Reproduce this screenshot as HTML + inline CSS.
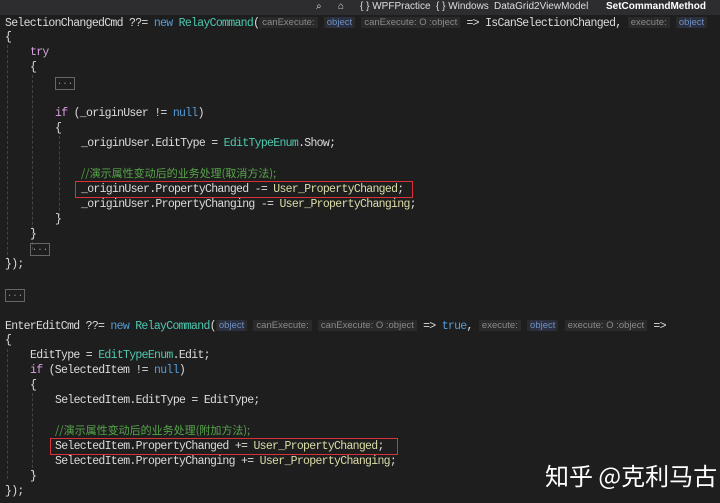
<!DOCTYPE html>
<html><head><meta charset="utf-8"><style>
body{margin:0;width:720px;height:503px;background:#1e1e1e;overflow:hidden;position:relative;font-family:"Liberation Mono","Noto Sans CJK SC",monospace;}
.bar{position:absolute;left:0;top:0;width:720px;height:15px;background:#2d2d30;font-family:"Liberation Sans",sans-serif;font-size:10px;color:#ddd;}
.bar span{position:absolute;top:1px;white-space:nowrap}
.l{position:absolute;white-space:pre;font-size:11.5px;letter-spacing:-0.7px;line-height:15px;color:#dcdcdc;height:15px}
.k{color:#569cd6}.t{color:#4ec9b0}.p{color:#d8a0df}.m{color:#dcdcaa}.c{color:#57a64a;font-family:"Noto Sans CJK SC",sans-serif;letter-spacing:0}
.h{font-family:"Liberation Sans",sans-serif;font-size:9.5px;letter-spacing:0;color:#8a8a8a;background:#2a2a2a;padding:0 3px;vertical-align:1px}
.h b{font-weight:normal;color:#6f8fbf;background:#2a3040}
.box{position:absolute;border:1px solid #d9313a}
.dots{position:absolute;border:1px solid #666;color:#999;font-size:9px;line-height:9px;width:18px;height:11px;text-align:center}
.g{position:absolute;border-left:1px dashed #444;width:0}
</style></head><body>
<div class="bar"><span style="left:316px">⌕</span><span style="left:338px">⌂</span><span style="left:360px">{ } WPFPractice</span><span style="left:436px">{ } Windows</span><span style="left:494px;color:#ddd">DataGrid2ViewModel</span><span style="left:606px;font-weight:bold;color:#fff">SetCommandMethod</span></div>
<div class="g" style="left:7px;top:45px;height:215px"></div>
<div class="g" style="left:32px;top:75px;height:175px"></div>
<div class="g" style="left:59px;top:136px;height:80px"></div>
<div class="g" style="left:7px;top:349px;height:130px"></div>
<div class="g" style="left:32px;top:393px;height:80px"></div>

<div class="l" style="left:5px;top:15px">SelectionChangedCmd ??= <span class="k">new</span> <span class="t">RelayCommand</span>(<span class="h">canExecute:</span> <span class="h"><b>object</b></span> <span class="h">canExecute: O :object</span> =&gt; IsCanSelectionChanged, <span class="h">execute:</span> <span class="h"><b>object</b></span></div>
<div class="l" style="left:5px;top:30px">{</div>
<div class="l" style="left:30px;top:45px"><span class="p">try</span></div>
<div class="l" style="left:30px;top:60px">{</div>
<div class="dots" style="left:55px;top:77px">...</div>
<div class="l" style="left:55px;top:106px"><span class="p">if</span> (_originUser != <span class="k">null</span>)</div>
<div class="l" style="left:55px;top:121px">{</div>
<div class="l" style="left:81px;top:136px">_originUser.EditType = <span class="t">EditTypeEnum</span>.Show;</div>
<div class="l c" style="left:81px;top:166px;font-size:11px">//演示属性变动后的业务处理(取消方法);</div>
<div class="l" style="left:81px;top:182px">_originUser.PropertyChanged -= <span class="m">User_PropertyChanged</span>;</div>
<div class="box" style="left:75px;top:181px;width:336px;height:15px"></div>
<div class="l" style="left:81px;top:197px">_originUser.PropertyChanging -= <span class="m">User_PropertyChanging</span>;</div>
<div class="l" style="left:55px;top:212px">}</div>
<div class="l" style="left:30px;top:227px">}</div>
<div class="dots" style="left:30px;top:243px">...</div>
<div class="l" style="left:5px;top:257px">});</div>
<div class="dots" style="left:5px;top:289px">...</div>
<div class="l" style="left:5px;top:318px">EnterEditCmd ??= <span class="k">new</span> <span class="t">RelayCommand</span>(<span class="h"><b>object</b></span> <span class="h">canExecute:</span> <span class="h">canExecute: O :object</span> =&gt; <span class="k">true</span>, <span class="h">execute:</span> <span class="h"><b>object</b></span> <span class="h">execute: O :object</span> =&gt;</div>
<div class="l" style="left:5px;top:333px">{</div>
<div class="l" style="left:30px;top:348px">EditType = <span class="t">EditTypeEnum</span>.Edit;</div>
<div class="l" style="left:30px;top:363px"><span class="p">if</span> (SelectedItem != <span class="k">null</span>)</div>
<div class="l" style="left:30px;top:378px">{</div>
<div class="l" style="left:55px;top:393px">SelectedItem.EditType = EditType;</div>
<div class="l c" style="left:55px;top:423px;font-size:11px">//演示属性变动后的业务处理(附加方法);</div>
<div class="l" style="left:55px;top:439px">SelectedItem.PropertyChanged += <span class="m">User_PropertyChanged</span>;</div>
<div class="box" style="left:50px;top:438px;width:346px;height:15px"></div>
<div class="l" style="left:55px;top:454px">SelectedItem.PropertyChanging += <span class="m">User_PropertyChanging</span>;</div>
<div class="l" style="left:30px;top:469px">}</div>
<div class="l" style="left:5px;top:484px">});</div>
<div style="position:absolute;left:545px;top:457px;font-family:'Noto Sans CJK SC',sans-serif;font-size:24px;color:#fff;white-space:nowrap">知乎 @克利马古</div>
</body></html>
